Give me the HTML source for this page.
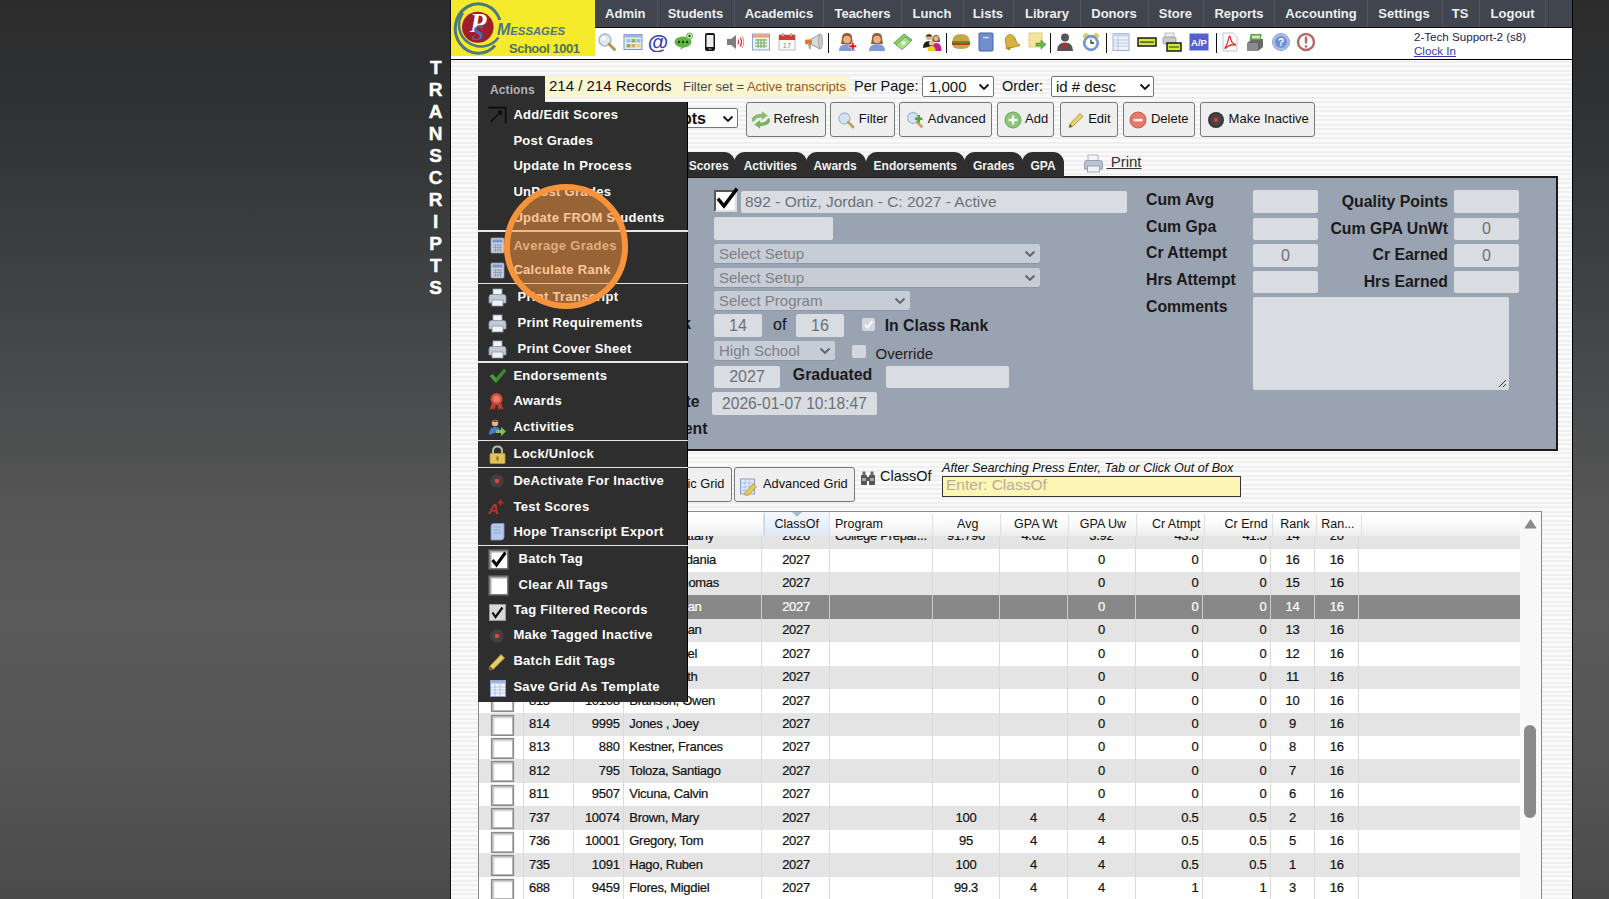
<!DOCTYPE html>
<html><head><meta charset="utf-8">
<style>
*{box-sizing:border-box;margin:0;padding:0}
html,body{width:1609px;height:899px;overflow:hidden}
body{position:relative;font-family:"Liberation Sans",sans-serif;background:linear-gradient(to bottom,#2c2c2d 0px,#303132 100px,#3b3c3e 230px,#4b4c4d 400px,#585858 540px,#5a5a5a 620px,#555 760px,#4b4b4b 899px);}
.a{position:absolute}
.vt{left:425.7px;width:20px;text-align:center;color:#fff;font-weight:bold;font-size:19px;line-height:22px;-webkit-text-stroke:.4px #fff}
#panel{left:450px;top:0;width:1122px;height:899px;background:repeating-linear-gradient(to bottom,#fafafa 0,#fafafa 2.3px,#efefef 2.3px,#efefef 4.5px);border-left:1px solid #111}
#rgut{left:1572px;top:0;width:1px;height:899px;background:#000}
#logo{left:451px;top:0;width:144px;height:58px;background:#f6ea2b}
#nav{left:595px;top:0;width:977px;height:28px;background:#40454f;border-bottom:1px solid #0a0a0a}
.ni{top:0;height:28px;line-height:27px;color:#eef0f0;font-weight:bold;font-size:13px;text-align:center}
.ns{top:0;width:1px;height:27px;background:#535862}
#icons{left:595px;top:28px;width:977px;height:30px;background:#fff}
#hline{left:451px;top:59px;width:1121px;height:1px;background:#000}
#wline{left:451px;top:55.7px;width:144px;height:3.3px;background:#fff}
.sel{background:#fff;border:1px solid #767676;border-radius:2px;overflow:hidden;font-size:15px;color:#111}
.sel span{position:absolute;top:0;line-height:19px;white-space:nowrap}
.chev{position:absolute;top:6px}
.btn{background:#efefef;border:1px solid #787878;border-radius:3px;font-size:13px;color:#111}
.btn span{top:0;line-height:31px;white-space:nowrap}
.tab{top:152px;height:24.5px;background:#2e2e2e;border-radius:11px 11px 0 0}
.tabt{top:153.5px;line-height:25px;font-size:12px;font-weight:bold;color:#f2f2f2;white-space:nowrap}
.inp{background:#d9dce1;border-radius:2px;white-space:nowrap;overflow:hidden}
.lbl{font-weight:bold;color:#1a1a1a;white-space:nowrap}
.mi{font-size:13px;font-weight:bold;letter-spacing:.3px;line-height:19px;white-space:nowrap}
.gt{font-size:13px;letter-spacing:-.3px;line-height:16px;white-space:nowrap;-webkit-text-stroke:.2px currentColor}
.gh{top:516px;font-size:12.5px;line-height:16px;color:#111;white-space:nowrap}
.cb{width:23px;height:21px;background:#fff;border:1px solid #8a8a8a;box-shadow:inset 0 0 0 1px #b5b5b5,inset 2px 2px 2px #c8c8c8,0 0 1px #aaa}
</style></head><body>
<div class="a vt" style="top:57px">T<br>R<br>A<br>N<br>S<br>C<br>R<br>I<br>P<br>T<br>S</div>
<div id="panel" class="a"></div>
<div id="rgut" class="a"></div>
<div id="logo" class="a"></div>
<svg class="a" style="left:451px;top:0" width="144" height="58" viewBox="0 0 144 58">
<rect x="1" y="0" width="142.5" height="55.7" fill="#f6ea2c"/>
<path d="M48.9 20 A23 24.7 0 1 0 44 45.5" fill="none" stroke="#4a7a80" stroke-width="3"/>
<path d="M12 13 A21 20.5 0 1 0 47.5 37.5" fill="none" stroke="#4a7a80" stroke-width="2.5"/>
<ellipse cx="26.8" cy="27.2" rx="15.8" ry="15.5" fill="#9c1f2b"/>
<text x="19" y="32.3" font-family="Liberation Serif" font-style="italic" font-weight="bold" font-size="27" fill="#fff">P</text>
<text x="21" y="40" font-family="Liberation Serif" font-style="italic" font-weight="bold" font-size="22" fill="#4e68b4">S</text>
<text x="46" y="34.8" font-family="Liberation Sans" font-style="italic" font-weight="bold" fill="#4b7881"><tspan font-size="16">M</tspan><tspan font-size="11.3">ESSAGES</tspan></text>
<text x="58" y="52.8" font-family="Liberation Sans" font-weight="bold" font-size="13" fill="#4e725f" textLength="71">School 1001</text>
</svg>

<div id="nav" class="a"></div>
<div class="a ni" style="left:575.3px;width:100px">Admin</div>
<div class="a ni" style="left:645.5px;width:100px">Students</div>
<div class="a ni" style="left:729.0px;width:100px">Academics</div>
<div class="a ni" style="left:812.5px;width:100px">Teachers</div>
<div class="a ni" style="left:882.0px;width:100px">Lunch</div>
<div class="a ni" style="left:937.8px;width:100px">Lists</div>
<div class="a ni" style="left:997.0px;width:100px">Library</div>
<div class="a ni" style="left:1064.0px;width:100px">Donors</div>
<div class="a ni" style="left:1125.4px;width:100px">Store</div>
<div class="a ni" style="left:1189.0px;width:100px">Reports</div>
<div class="a ni" style="left:1271.0px;width:100px">Accounting</div>
<div class="a ni" style="left:1354.0px;width:100px">Settings</div>
<div class="a ni" style="left:1410.0px;width:100px">TS</div>
<div class="a ni" style="left:1462.6px;width:100px">Logout</div>
<div class="a ns" style="left:657px"></div>
<div class="a ns" style="left:734px"></div>
<div class="a ns" style="left:823px"></div>
<div class="a ns" style="left:901px"></div>
<div class="a ns" style="left:963px"></div>
<div class="a ns" style="left:1013px"></div>
<div class="a ns" style="left:1080px"></div>
<div class="a ns" style="left:1148px"></div>
<div class="a ns" style="left:1203px"></div>
<div class="a ns" style="left:1274px"></div>
<div class="a ns" style="left:1367px"></div>
<div class="a ns" style="left:1442px"></div>
<div class="a ns" style="left:1479px"></div>
<div class="a ns" style="left:1545px"></div>
<div id="icons" class="a"></div>
<!--GRID-->
<div class="a btn" style="left:640px;top:467px;width:92px;height:34.5px"><span class="a" style="left:-16.5px;width:100px;text-align:right;line-height:32px;font-size:12.8px">Basic Grid</span></div>
<div class="a btn" style="left:734px;top:467px;width:121px;height:34.5px"><svg class="a" style="left:4px;top:8px" width="20" height="20" viewBox="0 0 20 20"><rect x="1.5" y="3" width="14" height="15" fill="#dfe8f6" stroke="#8aa0cc" stroke-width="1"/><path d="M2 7 H15 M2 11 H15 M2 14.5 H15 M6 3.5 V17.5 M10.5 3.5 V17.5" stroke="#a9bde0" stroke-width=".8"/><path d="M5 18 L14 8 L17.5 11 L8.5 20Z" fill="#e6c85a" stroke="#b09040" stroke-width=".8"/></svg><span class="a" style="left:28px;line-height:32px;font-size:12.8px">Advanced Grid</span></div>
<svg class="a" style="left:860px;top:470px" width="16" height="16" viewBox="0 0 16 16"><rect x="1" y="5" width="6" height="10" rx="1" fill="#555"/><rect x="9" y="5" width="6" height="10" rx="1" fill="#555"/><rect x="2.5" y="1.5" width="3" height="4" fill="#666"/><rect x="10.5" y="1.5" width="3" height="4" fill="#666"/><rect x="6" y="7" width="4" height="4" fill="#555"/><rect x="2" y="8" width="4" height="3" fill="#aaa"/><rect x="10" y="8" width="4" height="3" fill="#aaa"/></svg>
<div class="a" style="left:880px;top:466px;line-height:21px;font-size:14.5px;color:#111">ClassOf</div>
<div class="a" style="left:942px;top:460px;line-height:17px;font-size:12.6px;font-style:italic;color:#111;white-space:nowrap">After Searching Press Enter, Tab or Click Out of Box</div>
<div class="a" style="left:942px;top:475.5px;width:299px;height:21px;background:#fcf5b4;border:1px solid #333;line-height:16.5px;font-size:15.5px;color:#b5b09a;padding-left:3px">Enter: ClassOf</div>
<div class="a" style="left:478px;top:511px;width:1064px;height:400px;background:#fff;border:1px solid #8a8a8a;border-bottom:none"></div>
<div class="a" style="left:1520px;top:512px;width:21px;height:390px;background:#f9f9f9"></div>
<div class="a" style="left:1524.2px;top:725px;width:11.6px;height:93px;border-radius:6px;background:#8a8a8a"></div>
<svg class="a" style="left:1523.5px;top:518.5px" width="13" height="10" viewBox="0 0 13 10"><path d="M6.5 1.2 L11.8 9 H1.2Z" fill="#8a8a8a" stroke="#8a8a8a" stroke-width="1.2" stroke-linejoin="round"/></svg>
<div class="a" style="left:479px;top:525.00px;width:1041px;height:23.50px;background:#e4e4e4"></div>
<div class="a" style="left:522.5px;top:525.00px;width:1px;height:23.50px;background:#dadada"></div>
<div class="a" style="left:572.7px;top:525.00px;width:1px;height:23.50px;background:#dadada"></div>
<div class="a" style="left:622.9px;top:525.00px;width:1px;height:23.50px;background:#dadada"></div>
<div class="a" style="left:761.0px;top:525.00px;width:1px;height:23.50px;background:#dadada"></div>
<div class="a" style="left:828.8px;top:525.00px;width:1px;height:23.50px;background:#dadada"></div>
<div class="a" style="left:932.0px;top:525.00px;width:1px;height:23.50px;background:#dadada"></div>
<div class="a" style="left:999.0px;top:525.00px;width:1px;height:23.50px;background:#dadada"></div>
<div class="a" style="left:1067.0px;top:525.00px;width:1px;height:23.50px;background:#dadada"></div>
<div class="a" style="left:1134.8px;top:525.00px;width:1px;height:23.50px;background:#dadada"></div>
<div class="a" style="left:1202.1px;top:525.00px;width:1px;height:23.50px;background:#dadada"></div>
<div class="a" style="left:1270.0px;top:525.00px;width:1px;height:23.50px;background:#dadada"></div>
<div class="a" style="left:1314.1px;top:525.00px;width:1px;height:23.50px;background:#dadada"></div>
<div class="a" style="left:1358.3px;top:525.00px;width:1px;height:23.50px;background:#dadada"></div>
<div class="a gt" style="left:529.0px;top:528.4px;color:#111">821</div>
<div class="a gt" style="left:519.6px;width:100px;text-align:right;top:528.4px;color:#111">10113</div>
<div class="a gt" style="left:614.0px;width:100px;text-align:right;top:528.4px;color:#111">Adams, Brittany</div>
<div class="a gt" style="left:746.0px;width:100px;text-align:center;top:528.4px;color:#111">2026</div>
<div class="a gt" style="left:916.0px;width:100px;text-align:center;top:528.4px;color:#111">91.796</div>
<div class="a gt" style="left:835.0px;top:528.4px;color:#111">College Prepar...</div>
<div class="a gt" style="left:983.5px;width:100px;text-align:center;top:528.4px;color:#111">4.02</div>
<div class="a gt" style="left:1051.4px;width:100px;text-align:center;top:528.4px;color:#111">3.92</div>
<div class="a gt" style="left:1098.5px;width:100px;text-align:right;top:528.4px;color:#111">43.5</div>
<div class="a gt" style="left:1166.5px;width:100px;text-align:right;top:528.4px;color:#111">41.5</div>
<div class="a gt" style="left:1242.5px;width:100px;text-align:center;top:528.4px;color:#111">14</div>
<div class="a gt" style="left:1286.7px;width:100px;text-align:center;top:528.4px;color:#111">20</div>
<div class="a cb" style="left:490.5px;top:527.00px"></div>
<div class="a" style="left:479px;top:548.50px;width:1041px;height:23.43px;background:#ffffff"></div>
<div class="a" style="left:522.5px;top:548.50px;width:1px;height:23.43px;background:#dadada"></div>
<div class="a" style="left:572.7px;top:548.50px;width:1px;height:23.43px;background:#dadada"></div>
<div class="a" style="left:622.9px;top:548.50px;width:1px;height:23.43px;background:#dadada"></div>
<div class="a" style="left:761.0px;top:548.50px;width:1px;height:23.43px;background:#dadada"></div>
<div class="a" style="left:828.8px;top:548.50px;width:1px;height:23.43px;background:#dadada"></div>
<div class="a" style="left:932.0px;top:548.50px;width:1px;height:23.43px;background:#dadada"></div>
<div class="a" style="left:999.0px;top:548.50px;width:1px;height:23.43px;background:#dadada"></div>
<div class="a" style="left:1067.0px;top:548.50px;width:1px;height:23.43px;background:#dadada"></div>
<div class="a" style="left:1134.8px;top:548.50px;width:1px;height:23.43px;background:#dadada"></div>
<div class="a" style="left:1202.1px;top:548.50px;width:1px;height:23.43px;background:#dadada"></div>
<div class="a" style="left:1270.0px;top:548.50px;width:1px;height:23.43px;background:#dadada"></div>
<div class="a" style="left:1314.1px;top:548.50px;width:1px;height:23.43px;background:#dadada"></div>
<div class="a" style="left:1358.3px;top:548.50px;width:1px;height:23.43px;background:#dadada"></div>
<div class="a gt" style="left:529.0px;top:551.9px;color:#111">820</div>
<div class="a gt" style="left:519.6px;width:100px;text-align:right;top:551.9px;color:#111">10112</div>
<div class="a gt" style="left:616.0px;width:100px;text-align:right;top:551.9px;color:#111">Brown, Jordania</div>
<div class="a gt" style="left:746.0px;width:100px;text-align:center;top:551.9px;color:#111">2027</div>
<div class="a gt" style="left:1051.4px;width:100px;text-align:center;top:551.9px;color:#111">0</div>
<div class="a gt" style="left:1098.5px;width:100px;text-align:right;top:551.9px;color:#111">0</div>
<div class="a gt" style="left:1166.5px;width:100px;text-align:right;top:551.9px;color:#111">0</div>
<div class="a gt" style="left:1242.5px;width:100px;text-align:center;top:551.9px;color:#111">16</div>
<div class="a gt" style="left:1286.7px;width:100px;text-align:center;top:551.9px;color:#111">16</div>
<div class="a cb" style="left:490.5px;top:550.50px"></div>
<div class="a" style="left:479px;top:571.93px;width:1041px;height:23.43px;background:#e4e4e4"></div>
<div class="a" style="left:522.5px;top:571.93px;width:1px;height:23.43px;background:#dadada"></div>
<div class="a" style="left:572.7px;top:571.93px;width:1px;height:23.43px;background:#dadada"></div>
<div class="a" style="left:622.9px;top:571.93px;width:1px;height:23.43px;background:#dadada"></div>
<div class="a" style="left:761.0px;top:571.93px;width:1px;height:23.43px;background:#dadada"></div>
<div class="a" style="left:828.8px;top:571.93px;width:1px;height:23.43px;background:#dadada"></div>
<div class="a" style="left:932.0px;top:571.93px;width:1px;height:23.43px;background:#dadada"></div>
<div class="a" style="left:999.0px;top:571.93px;width:1px;height:23.43px;background:#dadada"></div>
<div class="a" style="left:1067.0px;top:571.93px;width:1px;height:23.43px;background:#dadada"></div>
<div class="a" style="left:1134.8px;top:571.93px;width:1px;height:23.43px;background:#dadada"></div>
<div class="a" style="left:1202.1px;top:571.93px;width:1px;height:23.43px;background:#dadada"></div>
<div class="a" style="left:1270.0px;top:571.93px;width:1px;height:23.43px;background:#dadada"></div>
<div class="a" style="left:1314.1px;top:571.93px;width:1px;height:23.43px;background:#dadada"></div>
<div class="a" style="left:1358.3px;top:571.93px;width:1px;height:23.43px;background:#dadada"></div>
<div class="a gt" style="left:529.0px;top:575.3px;color:#111">819</div>
<div class="a gt" style="left:519.6px;width:100px;text-align:right;top:575.3px;color:#111">10111</div>
<div class="a gt" style="left:619.0px;width:100px;text-align:right;top:575.3px;color:#111">Smith, Thomas</div>
<div class="a gt" style="left:746.0px;width:100px;text-align:center;top:575.3px;color:#111">2027</div>
<div class="a gt" style="left:1051.4px;width:100px;text-align:center;top:575.3px;color:#111">0</div>
<div class="a gt" style="left:1098.5px;width:100px;text-align:right;top:575.3px;color:#111">0</div>
<div class="a gt" style="left:1166.5px;width:100px;text-align:right;top:575.3px;color:#111">0</div>
<div class="a gt" style="left:1242.5px;width:100px;text-align:center;top:575.3px;color:#111">15</div>
<div class="a gt" style="left:1286.7px;width:100px;text-align:center;top:575.3px;color:#111">16</div>
<div class="a cb" style="left:490.5px;top:573.93px"></div>
<div class="a" style="left:479px;top:595.36px;width:1041px;height:23.43px;background:#888888"></div>
<div class="a" style="left:522.5px;top:595.36px;width:1px;height:23.43px;background:#cdcdcd"></div>
<div class="a" style="left:572.7px;top:595.36px;width:1px;height:23.43px;background:#cdcdcd"></div>
<div class="a" style="left:622.9px;top:595.36px;width:1px;height:23.43px;background:#cdcdcd"></div>
<div class="a" style="left:761.0px;top:595.36px;width:1px;height:23.43px;background:#cdcdcd"></div>
<div class="a" style="left:828.8px;top:595.36px;width:1px;height:23.43px;background:#cdcdcd"></div>
<div class="a" style="left:932.0px;top:595.36px;width:1px;height:23.43px;background:#cdcdcd"></div>
<div class="a" style="left:999.0px;top:595.36px;width:1px;height:23.43px;background:#cdcdcd"></div>
<div class="a" style="left:1067.0px;top:595.36px;width:1px;height:23.43px;background:#cdcdcd"></div>
<div class="a" style="left:1134.8px;top:595.36px;width:1px;height:23.43px;background:#cdcdcd"></div>
<div class="a" style="left:1202.1px;top:595.36px;width:1px;height:23.43px;background:#cdcdcd"></div>
<div class="a" style="left:1270.0px;top:595.36px;width:1px;height:23.43px;background:#cdcdcd"></div>
<div class="a" style="left:1314.1px;top:595.36px;width:1px;height:23.43px;background:#cdcdcd"></div>
<div class="a" style="left:1358.3px;top:595.36px;width:1px;height:23.43px;background:#cdcdcd"></div>
<div class="a gt" style="left:529.0px;top:598.8px;color:#fff">818</div>
<div class="a gt" style="left:519.6px;width:100px;text-align:right;top:598.8px;color:#fff">10110</div>
<div class="a gt" style="left:601.5px;width:100px;text-align:right;top:598.8px;color:#fff">Ortiz, Jordan</div>
<div class="a gt" style="left:746.0px;width:100px;text-align:center;top:598.8px;color:#fff">2027</div>
<div class="a gt" style="left:1051.4px;width:100px;text-align:center;top:598.8px;color:#fff">0</div>
<div class="a gt" style="left:1098.5px;width:100px;text-align:right;top:598.8px;color:#fff">0</div>
<div class="a gt" style="left:1166.5px;width:100px;text-align:right;top:598.8px;color:#fff">0</div>
<div class="a gt" style="left:1242.5px;width:100px;text-align:center;top:598.8px;color:#fff">14</div>
<div class="a gt" style="left:1286.7px;width:100px;text-align:center;top:598.8px;color:#fff">16</div>
<div class="a cb" style="left:490.5px;top:597.36px"></div>
<div class="a" style="left:479px;top:618.79px;width:1041px;height:23.43px;background:#e4e4e4"></div>
<div class="a" style="left:522.5px;top:618.79px;width:1px;height:23.43px;background:#dadada"></div>
<div class="a" style="left:572.7px;top:618.79px;width:1px;height:23.43px;background:#dadada"></div>
<div class="a" style="left:622.9px;top:618.79px;width:1px;height:23.43px;background:#dadada"></div>
<div class="a" style="left:761.0px;top:618.79px;width:1px;height:23.43px;background:#dadada"></div>
<div class="a" style="left:828.8px;top:618.79px;width:1px;height:23.43px;background:#dadada"></div>
<div class="a" style="left:932.0px;top:618.79px;width:1px;height:23.43px;background:#dadada"></div>
<div class="a" style="left:999.0px;top:618.79px;width:1px;height:23.43px;background:#dadada"></div>
<div class="a" style="left:1067.0px;top:618.79px;width:1px;height:23.43px;background:#dadada"></div>
<div class="a" style="left:1134.8px;top:618.79px;width:1px;height:23.43px;background:#dadada"></div>
<div class="a" style="left:1202.1px;top:618.79px;width:1px;height:23.43px;background:#dadada"></div>
<div class="a" style="left:1270.0px;top:618.79px;width:1px;height:23.43px;background:#dadada"></div>
<div class="a" style="left:1314.1px;top:618.79px;width:1px;height:23.43px;background:#dadada"></div>
<div class="a" style="left:1358.3px;top:618.79px;width:1px;height:23.43px;background:#dadada"></div>
<div class="a gt" style="left:529.0px;top:622.2px;color:#111">817</div>
<div class="a gt" style="left:519.6px;width:100px;text-align:right;top:622.2px;color:#111">10109</div>
<div class="a gt" style="left:601.5px;width:100px;text-align:right;top:622.2px;color:#111">Ortiz, Juan</div>
<div class="a gt" style="left:746.0px;width:100px;text-align:center;top:622.2px;color:#111">2027</div>
<div class="a gt" style="left:1051.4px;width:100px;text-align:center;top:622.2px;color:#111">0</div>
<div class="a gt" style="left:1098.5px;width:100px;text-align:right;top:622.2px;color:#111">0</div>
<div class="a gt" style="left:1166.5px;width:100px;text-align:right;top:622.2px;color:#111">0</div>
<div class="a gt" style="left:1242.5px;width:100px;text-align:center;top:622.2px;color:#111">13</div>
<div class="a gt" style="left:1286.7px;width:100px;text-align:center;top:622.2px;color:#111">16</div>
<div class="a cb" style="left:490.5px;top:620.79px"></div>
<div class="a" style="left:479px;top:642.22px;width:1041px;height:23.43px;background:#ffffff"></div>
<div class="a" style="left:522.5px;top:642.22px;width:1px;height:23.43px;background:#dadada"></div>
<div class="a" style="left:572.7px;top:642.22px;width:1px;height:23.43px;background:#dadada"></div>
<div class="a" style="left:622.9px;top:642.22px;width:1px;height:23.43px;background:#dadada"></div>
<div class="a" style="left:761.0px;top:642.22px;width:1px;height:23.43px;background:#dadada"></div>
<div class="a" style="left:828.8px;top:642.22px;width:1px;height:23.43px;background:#dadada"></div>
<div class="a" style="left:932.0px;top:642.22px;width:1px;height:23.43px;background:#dadada"></div>
<div class="a" style="left:999.0px;top:642.22px;width:1px;height:23.43px;background:#dadada"></div>
<div class="a" style="left:1067.0px;top:642.22px;width:1px;height:23.43px;background:#dadada"></div>
<div class="a" style="left:1134.8px;top:642.22px;width:1px;height:23.43px;background:#dadada"></div>
<div class="a" style="left:1202.1px;top:642.22px;width:1px;height:23.43px;background:#dadada"></div>
<div class="a" style="left:1270.0px;top:642.22px;width:1px;height:23.43px;background:#dadada"></div>
<div class="a" style="left:1314.1px;top:642.22px;width:1px;height:23.43px;background:#dadada"></div>
<div class="a" style="left:1358.3px;top:642.22px;width:1px;height:23.43px;background:#dadada"></div>
<div class="a gt" style="left:529.0px;top:645.6px;color:#111">816</div>
<div class="a gt" style="left:519.6px;width:100px;text-align:right;top:645.6px;color:#111">10107</div>
<div class="a gt" style="left:597.0px;width:100px;text-align:right;top:645.6px;color:#111">Lopez, Daniel</div>
<div class="a gt" style="left:746.0px;width:100px;text-align:center;top:645.6px;color:#111">2027</div>
<div class="a gt" style="left:1051.4px;width:100px;text-align:center;top:645.6px;color:#111">0</div>
<div class="a gt" style="left:1098.5px;width:100px;text-align:right;top:645.6px;color:#111">0</div>
<div class="a gt" style="left:1166.5px;width:100px;text-align:right;top:645.6px;color:#111">0</div>
<div class="a gt" style="left:1242.5px;width:100px;text-align:center;top:645.6px;color:#111">12</div>
<div class="a gt" style="left:1286.7px;width:100px;text-align:center;top:645.6px;color:#111">16</div>
<div class="a cb" style="left:490.5px;top:644.22px"></div>
<div class="a" style="left:479px;top:665.65px;width:1041px;height:23.43px;background:#e4e4e4"></div>
<div class="a" style="left:522.5px;top:665.65px;width:1px;height:23.43px;background:#dadada"></div>
<div class="a" style="left:572.7px;top:665.65px;width:1px;height:23.43px;background:#dadada"></div>
<div class="a" style="left:622.9px;top:665.65px;width:1px;height:23.43px;background:#dadada"></div>
<div class="a" style="left:761.0px;top:665.65px;width:1px;height:23.43px;background:#dadada"></div>
<div class="a" style="left:828.8px;top:665.65px;width:1px;height:23.43px;background:#dadada"></div>
<div class="a" style="left:932.0px;top:665.65px;width:1px;height:23.43px;background:#dadada"></div>
<div class="a" style="left:999.0px;top:665.65px;width:1px;height:23.43px;background:#dadada"></div>
<div class="a" style="left:1067.0px;top:665.65px;width:1px;height:23.43px;background:#dadada"></div>
<div class="a" style="left:1134.8px;top:665.65px;width:1px;height:23.43px;background:#dadada"></div>
<div class="a" style="left:1202.1px;top:665.65px;width:1px;height:23.43px;background:#dadada"></div>
<div class="a" style="left:1270.0px;top:665.65px;width:1px;height:23.43px;background:#dadada"></div>
<div class="a" style="left:1314.1px;top:665.65px;width:1px;height:23.43px;background:#dadada"></div>
<div class="a" style="left:1358.3px;top:665.65px;width:1px;height:23.43px;background:#dadada"></div>
<div class="a gt" style="left:529.0px;top:669.0px;color:#111">815</div>
<div class="a gt" style="left:519.6px;width:100px;text-align:right;top:669.0px;color:#111">10106</div>
<div class="a gt" style="left:597.5px;width:100px;text-align:right;top:669.0px;color:#111">Young, Elizabeth</div>
<div class="a gt" style="left:746.0px;width:100px;text-align:center;top:669.0px;color:#111">2027</div>
<div class="a gt" style="left:1051.4px;width:100px;text-align:center;top:669.0px;color:#111">0</div>
<div class="a gt" style="left:1098.5px;width:100px;text-align:right;top:669.0px;color:#111">0</div>
<div class="a gt" style="left:1166.5px;width:100px;text-align:right;top:669.0px;color:#111">0</div>
<div class="a gt" style="left:1242.5px;width:100px;text-align:center;top:669.0px;color:#111">11</div>
<div class="a gt" style="left:1286.7px;width:100px;text-align:center;top:669.0px;color:#111">16</div>
<div class="a cb" style="left:490.5px;top:667.65px"></div>
<div class="a" style="left:479px;top:689.08px;width:1041px;height:23.43px;background:#ffffff"></div>
<div class="a" style="left:522.5px;top:689.08px;width:1px;height:23.43px;background:#dadada"></div>
<div class="a" style="left:572.7px;top:689.08px;width:1px;height:23.43px;background:#dadada"></div>
<div class="a" style="left:622.9px;top:689.08px;width:1px;height:23.43px;background:#dadada"></div>
<div class="a" style="left:761.0px;top:689.08px;width:1px;height:23.43px;background:#dadada"></div>
<div class="a" style="left:828.8px;top:689.08px;width:1px;height:23.43px;background:#dadada"></div>
<div class="a" style="left:932.0px;top:689.08px;width:1px;height:23.43px;background:#dadada"></div>
<div class="a" style="left:999.0px;top:689.08px;width:1px;height:23.43px;background:#dadada"></div>
<div class="a" style="left:1067.0px;top:689.08px;width:1px;height:23.43px;background:#dadada"></div>
<div class="a" style="left:1134.8px;top:689.08px;width:1px;height:23.43px;background:#dadada"></div>
<div class="a" style="left:1202.1px;top:689.08px;width:1px;height:23.43px;background:#dadada"></div>
<div class="a" style="left:1270.0px;top:689.08px;width:1px;height:23.43px;background:#dadada"></div>
<div class="a" style="left:1314.1px;top:689.08px;width:1px;height:23.43px;background:#dadada"></div>
<div class="a" style="left:1358.3px;top:689.08px;width:1px;height:23.43px;background:#dadada"></div>
<div class="a gt" style="left:529.0px;top:692.5px;color:#111">815</div>
<div class="a gt" style="left:519.6px;width:100px;text-align:right;top:692.5px;color:#111">10108</div>
<div class="a gt" style="left:629.3px;top:692.5px;color:#111">Branson, Owen</div>
<div class="a gt" style="left:746.0px;width:100px;text-align:center;top:692.5px;color:#111">2027</div>
<div class="a gt" style="left:1051.4px;width:100px;text-align:center;top:692.5px;color:#111">0</div>
<div class="a gt" style="left:1098.5px;width:100px;text-align:right;top:692.5px;color:#111">0</div>
<div class="a gt" style="left:1166.5px;width:100px;text-align:right;top:692.5px;color:#111">0</div>
<div class="a gt" style="left:1242.5px;width:100px;text-align:center;top:692.5px;color:#111">10</div>
<div class="a gt" style="left:1286.7px;width:100px;text-align:center;top:692.5px;color:#111">16</div>
<div class="a cb" style="left:490.5px;top:691.08px"></div>
<div class="a" style="left:479px;top:712.51px;width:1041px;height:23.43px;background:#e4e4e4"></div>
<div class="a" style="left:522.5px;top:712.51px;width:1px;height:23.43px;background:#dadada"></div>
<div class="a" style="left:572.7px;top:712.51px;width:1px;height:23.43px;background:#dadada"></div>
<div class="a" style="left:622.9px;top:712.51px;width:1px;height:23.43px;background:#dadada"></div>
<div class="a" style="left:761.0px;top:712.51px;width:1px;height:23.43px;background:#dadada"></div>
<div class="a" style="left:828.8px;top:712.51px;width:1px;height:23.43px;background:#dadada"></div>
<div class="a" style="left:932.0px;top:712.51px;width:1px;height:23.43px;background:#dadada"></div>
<div class="a" style="left:999.0px;top:712.51px;width:1px;height:23.43px;background:#dadada"></div>
<div class="a" style="left:1067.0px;top:712.51px;width:1px;height:23.43px;background:#dadada"></div>
<div class="a" style="left:1134.8px;top:712.51px;width:1px;height:23.43px;background:#dadada"></div>
<div class="a" style="left:1202.1px;top:712.51px;width:1px;height:23.43px;background:#dadada"></div>
<div class="a" style="left:1270.0px;top:712.51px;width:1px;height:23.43px;background:#dadada"></div>
<div class="a" style="left:1314.1px;top:712.51px;width:1px;height:23.43px;background:#dadada"></div>
<div class="a" style="left:1358.3px;top:712.51px;width:1px;height:23.43px;background:#dadada"></div>
<div class="a gt" style="left:529.0px;top:715.9px;color:#111">814</div>
<div class="a gt" style="left:519.6px;width:100px;text-align:right;top:715.9px;color:#111">9995</div>
<div class="a gt" style="left:629.3px;top:715.9px;color:#111">Jones , Joey</div>
<div class="a gt" style="left:746.0px;width:100px;text-align:center;top:715.9px;color:#111">2027</div>
<div class="a gt" style="left:1051.4px;width:100px;text-align:center;top:715.9px;color:#111">0</div>
<div class="a gt" style="left:1098.5px;width:100px;text-align:right;top:715.9px;color:#111">0</div>
<div class="a gt" style="left:1166.5px;width:100px;text-align:right;top:715.9px;color:#111">0</div>
<div class="a gt" style="left:1242.5px;width:100px;text-align:center;top:715.9px;color:#111">9</div>
<div class="a gt" style="left:1286.7px;width:100px;text-align:center;top:715.9px;color:#111">16</div>
<div class="a cb" style="left:490.5px;top:714.51px"></div>
<div class="a" style="left:479px;top:735.94px;width:1041px;height:23.43px;background:#ffffff"></div>
<div class="a" style="left:522.5px;top:735.94px;width:1px;height:23.43px;background:#dadada"></div>
<div class="a" style="left:572.7px;top:735.94px;width:1px;height:23.43px;background:#dadada"></div>
<div class="a" style="left:622.9px;top:735.94px;width:1px;height:23.43px;background:#dadada"></div>
<div class="a" style="left:761.0px;top:735.94px;width:1px;height:23.43px;background:#dadada"></div>
<div class="a" style="left:828.8px;top:735.94px;width:1px;height:23.43px;background:#dadada"></div>
<div class="a" style="left:932.0px;top:735.94px;width:1px;height:23.43px;background:#dadada"></div>
<div class="a" style="left:999.0px;top:735.94px;width:1px;height:23.43px;background:#dadada"></div>
<div class="a" style="left:1067.0px;top:735.94px;width:1px;height:23.43px;background:#dadada"></div>
<div class="a" style="left:1134.8px;top:735.94px;width:1px;height:23.43px;background:#dadada"></div>
<div class="a" style="left:1202.1px;top:735.94px;width:1px;height:23.43px;background:#dadada"></div>
<div class="a" style="left:1270.0px;top:735.94px;width:1px;height:23.43px;background:#dadada"></div>
<div class="a" style="left:1314.1px;top:735.94px;width:1px;height:23.43px;background:#dadada"></div>
<div class="a" style="left:1358.3px;top:735.94px;width:1px;height:23.43px;background:#dadada"></div>
<div class="a gt" style="left:529.0px;top:739.3px;color:#111">813</div>
<div class="a gt" style="left:519.6px;width:100px;text-align:right;top:739.3px;color:#111">880</div>
<div class="a gt" style="left:629.3px;top:739.3px;color:#111">Kestner, Frances</div>
<div class="a gt" style="left:746.0px;width:100px;text-align:center;top:739.3px;color:#111">2027</div>
<div class="a gt" style="left:1051.4px;width:100px;text-align:center;top:739.3px;color:#111">0</div>
<div class="a gt" style="left:1098.5px;width:100px;text-align:right;top:739.3px;color:#111">0</div>
<div class="a gt" style="left:1166.5px;width:100px;text-align:right;top:739.3px;color:#111">0</div>
<div class="a gt" style="left:1242.5px;width:100px;text-align:center;top:739.3px;color:#111">8</div>
<div class="a gt" style="left:1286.7px;width:100px;text-align:center;top:739.3px;color:#111">16</div>
<div class="a cb" style="left:490.5px;top:737.94px"></div>
<div class="a" style="left:479px;top:759.37px;width:1041px;height:23.43px;background:#e4e4e4"></div>
<div class="a" style="left:522.5px;top:759.37px;width:1px;height:23.43px;background:#dadada"></div>
<div class="a" style="left:572.7px;top:759.37px;width:1px;height:23.43px;background:#dadada"></div>
<div class="a" style="left:622.9px;top:759.37px;width:1px;height:23.43px;background:#dadada"></div>
<div class="a" style="left:761.0px;top:759.37px;width:1px;height:23.43px;background:#dadada"></div>
<div class="a" style="left:828.8px;top:759.37px;width:1px;height:23.43px;background:#dadada"></div>
<div class="a" style="left:932.0px;top:759.37px;width:1px;height:23.43px;background:#dadada"></div>
<div class="a" style="left:999.0px;top:759.37px;width:1px;height:23.43px;background:#dadada"></div>
<div class="a" style="left:1067.0px;top:759.37px;width:1px;height:23.43px;background:#dadada"></div>
<div class="a" style="left:1134.8px;top:759.37px;width:1px;height:23.43px;background:#dadada"></div>
<div class="a" style="left:1202.1px;top:759.37px;width:1px;height:23.43px;background:#dadada"></div>
<div class="a" style="left:1270.0px;top:759.37px;width:1px;height:23.43px;background:#dadada"></div>
<div class="a" style="left:1314.1px;top:759.37px;width:1px;height:23.43px;background:#dadada"></div>
<div class="a" style="left:1358.3px;top:759.37px;width:1px;height:23.43px;background:#dadada"></div>
<div class="a gt" style="left:529.0px;top:762.8px;color:#111">812</div>
<div class="a gt" style="left:519.6px;width:100px;text-align:right;top:762.8px;color:#111">795</div>
<div class="a gt" style="left:629.3px;top:762.8px;color:#111">Toloza, Santiago</div>
<div class="a gt" style="left:746.0px;width:100px;text-align:center;top:762.8px;color:#111">2027</div>
<div class="a gt" style="left:1051.4px;width:100px;text-align:center;top:762.8px;color:#111">0</div>
<div class="a gt" style="left:1098.5px;width:100px;text-align:right;top:762.8px;color:#111">0</div>
<div class="a gt" style="left:1166.5px;width:100px;text-align:right;top:762.8px;color:#111">0</div>
<div class="a gt" style="left:1242.5px;width:100px;text-align:center;top:762.8px;color:#111">7</div>
<div class="a gt" style="left:1286.7px;width:100px;text-align:center;top:762.8px;color:#111">16</div>
<div class="a cb" style="left:490.5px;top:761.37px"></div>
<div class="a" style="left:479px;top:782.80px;width:1041px;height:23.43px;background:#ffffff"></div>
<div class="a" style="left:522.5px;top:782.80px;width:1px;height:23.43px;background:#dadada"></div>
<div class="a" style="left:572.7px;top:782.80px;width:1px;height:23.43px;background:#dadada"></div>
<div class="a" style="left:622.9px;top:782.80px;width:1px;height:23.43px;background:#dadada"></div>
<div class="a" style="left:761.0px;top:782.80px;width:1px;height:23.43px;background:#dadada"></div>
<div class="a" style="left:828.8px;top:782.80px;width:1px;height:23.43px;background:#dadada"></div>
<div class="a" style="left:932.0px;top:782.80px;width:1px;height:23.43px;background:#dadada"></div>
<div class="a" style="left:999.0px;top:782.80px;width:1px;height:23.43px;background:#dadada"></div>
<div class="a" style="left:1067.0px;top:782.80px;width:1px;height:23.43px;background:#dadada"></div>
<div class="a" style="left:1134.8px;top:782.80px;width:1px;height:23.43px;background:#dadada"></div>
<div class="a" style="left:1202.1px;top:782.80px;width:1px;height:23.43px;background:#dadada"></div>
<div class="a" style="left:1270.0px;top:782.80px;width:1px;height:23.43px;background:#dadada"></div>
<div class="a" style="left:1314.1px;top:782.80px;width:1px;height:23.43px;background:#dadada"></div>
<div class="a" style="left:1358.3px;top:782.80px;width:1px;height:23.43px;background:#dadada"></div>
<div class="a gt" style="left:529.0px;top:786.2px;color:#111">811</div>
<div class="a gt" style="left:519.6px;width:100px;text-align:right;top:786.2px;color:#111">9507</div>
<div class="a gt" style="left:629.3px;top:786.2px;color:#111">Vicuna, Calvin</div>
<div class="a gt" style="left:746.0px;width:100px;text-align:center;top:786.2px;color:#111">2027</div>
<div class="a gt" style="left:1051.4px;width:100px;text-align:center;top:786.2px;color:#111">0</div>
<div class="a gt" style="left:1098.5px;width:100px;text-align:right;top:786.2px;color:#111">0</div>
<div class="a gt" style="left:1166.5px;width:100px;text-align:right;top:786.2px;color:#111">0</div>
<div class="a gt" style="left:1242.5px;width:100px;text-align:center;top:786.2px;color:#111">6</div>
<div class="a gt" style="left:1286.7px;width:100px;text-align:center;top:786.2px;color:#111">16</div>
<div class="a cb" style="left:490.5px;top:784.80px"></div>
<div class="a" style="left:479px;top:806.23px;width:1041px;height:23.43px;background:#e4e4e4"></div>
<div class="a" style="left:522.5px;top:806.23px;width:1px;height:23.43px;background:#dadada"></div>
<div class="a" style="left:572.7px;top:806.23px;width:1px;height:23.43px;background:#dadada"></div>
<div class="a" style="left:622.9px;top:806.23px;width:1px;height:23.43px;background:#dadada"></div>
<div class="a" style="left:761.0px;top:806.23px;width:1px;height:23.43px;background:#dadada"></div>
<div class="a" style="left:828.8px;top:806.23px;width:1px;height:23.43px;background:#dadada"></div>
<div class="a" style="left:932.0px;top:806.23px;width:1px;height:23.43px;background:#dadada"></div>
<div class="a" style="left:999.0px;top:806.23px;width:1px;height:23.43px;background:#dadada"></div>
<div class="a" style="left:1067.0px;top:806.23px;width:1px;height:23.43px;background:#dadada"></div>
<div class="a" style="left:1134.8px;top:806.23px;width:1px;height:23.43px;background:#dadada"></div>
<div class="a" style="left:1202.1px;top:806.23px;width:1px;height:23.43px;background:#dadada"></div>
<div class="a" style="left:1270.0px;top:806.23px;width:1px;height:23.43px;background:#dadada"></div>
<div class="a" style="left:1314.1px;top:806.23px;width:1px;height:23.43px;background:#dadada"></div>
<div class="a" style="left:1358.3px;top:806.23px;width:1px;height:23.43px;background:#dadada"></div>
<div class="a gt" style="left:529.0px;top:809.6px;color:#111">737</div>
<div class="a gt" style="left:519.6px;width:100px;text-align:right;top:809.6px;color:#111">10074</div>
<div class="a gt" style="left:629.3px;top:809.6px;color:#111">Brown, Mary</div>
<div class="a gt" style="left:746.0px;width:100px;text-align:center;top:809.6px;color:#111">2027</div>
<div class="a gt" style="left:916.0px;width:100px;text-align:center;top:809.6px;color:#111">100</div>
<div class="a gt" style="left:983.5px;width:100px;text-align:center;top:809.6px;color:#111">4</div>
<div class="a gt" style="left:1051.4px;width:100px;text-align:center;top:809.6px;color:#111">4</div>
<div class="a gt" style="left:1098.5px;width:100px;text-align:right;top:809.6px;color:#111">0.5</div>
<div class="a gt" style="left:1166.5px;width:100px;text-align:right;top:809.6px;color:#111">0.5</div>
<div class="a gt" style="left:1242.5px;width:100px;text-align:center;top:809.6px;color:#111">2</div>
<div class="a gt" style="left:1286.7px;width:100px;text-align:center;top:809.6px;color:#111">16</div>
<div class="a cb" style="left:490.5px;top:808.23px"></div>
<div class="a" style="left:479px;top:829.66px;width:1041px;height:23.43px;background:#ffffff"></div>
<div class="a" style="left:522.5px;top:829.66px;width:1px;height:23.43px;background:#dadada"></div>
<div class="a" style="left:572.7px;top:829.66px;width:1px;height:23.43px;background:#dadada"></div>
<div class="a" style="left:622.9px;top:829.66px;width:1px;height:23.43px;background:#dadada"></div>
<div class="a" style="left:761.0px;top:829.66px;width:1px;height:23.43px;background:#dadada"></div>
<div class="a" style="left:828.8px;top:829.66px;width:1px;height:23.43px;background:#dadada"></div>
<div class="a" style="left:932.0px;top:829.66px;width:1px;height:23.43px;background:#dadada"></div>
<div class="a" style="left:999.0px;top:829.66px;width:1px;height:23.43px;background:#dadada"></div>
<div class="a" style="left:1067.0px;top:829.66px;width:1px;height:23.43px;background:#dadada"></div>
<div class="a" style="left:1134.8px;top:829.66px;width:1px;height:23.43px;background:#dadada"></div>
<div class="a" style="left:1202.1px;top:829.66px;width:1px;height:23.43px;background:#dadada"></div>
<div class="a" style="left:1270.0px;top:829.66px;width:1px;height:23.43px;background:#dadada"></div>
<div class="a" style="left:1314.1px;top:829.66px;width:1px;height:23.43px;background:#dadada"></div>
<div class="a" style="left:1358.3px;top:829.66px;width:1px;height:23.43px;background:#dadada"></div>
<div class="a gt" style="left:529.0px;top:833.1px;color:#111">736</div>
<div class="a gt" style="left:519.6px;width:100px;text-align:right;top:833.1px;color:#111">10001</div>
<div class="a gt" style="left:629.3px;top:833.1px;color:#111">Gregory, Tom</div>
<div class="a gt" style="left:746.0px;width:100px;text-align:center;top:833.1px;color:#111">2027</div>
<div class="a gt" style="left:916.0px;width:100px;text-align:center;top:833.1px;color:#111">95</div>
<div class="a gt" style="left:983.5px;width:100px;text-align:center;top:833.1px;color:#111">4</div>
<div class="a gt" style="left:1051.4px;width:100px;text-align:center;top:833.1px;color:#111">4</div>
<div class="a gt" style="left:1098.5px;width:100px;text-align:right;top:833.1px;color:#111">0.5</div>
<div class="a gt" style="left:1166.5px;width:100px;text-align:right;top:833.1px;color:#111">0.5</div>
<div class="a gt" style="left:1242.5px;width:100px;text-align:center;top:833.1px;color:#111">5</div>
<div class="a gt" style="left:1286.7px;width:100px;text-align:center;top:833.1px;color:#111">16</div>
<div class="a cb" style="left:490.5px;top:831.66px"></div>
<div class="a" style="left:479px;top:853.09px;width:1041px;height:23.43px;background:#e4e4e4"></div>
<div class="a" style="left:522.5px;top:853.09px;width:1px;height:23.43px;background:#dadada"></div>
<div class="a" style="left:572.7px;top:853.09px;width:1px;height:23.43px;background:#dadada"></div>
<div class="a" style="left:622.9px;top:853.09px;width:1px;height:23.43px;background:#dadada"></div>
<div class="a" style="left:761.0px;top:853.09px;width:1px;height:23.43px;background:#dadada"></div>
<div class="a" style="left:828.8px;top:853.09px;width:1px;height:23.43px;background:#dadada"></div>
<div class="a" style="left:932.0px;top:853.09px;width:1px;height:23.43px;background:#dadada"></div>
<div class="a" style="left:999.0px;top:853.09px;width:1px;height:23.43px;background:#dadada"></div>
<div class="a" style="left:1067.0px;top:853.09px;width:1px;height:23.43px;background:#dadada"></div>
<div class="a" style="left:1134.8px;top:853.09px;width:1px;height:23.43px;background:#dadada"></div>
<div class="a" style="left:1202.1px;top:853.09px;width:1px;height:23.43px;background:#dadada"></div>
<div class="a" style="left:1270.0px;top:853.09px;width:1px;height:23.43px;background:#dadada"></div>
<div class="a" style="left:1314.1px;top:853.09px;width:1px;height:23.43px;background:#dadada"></div>
<div class="a" style="left:1358.3px;top:853.09px;width:1px;height:23.43px;background:#dadada"></div>
<div class="a gt" style="left:529.0px;top:856.5px;color:#111">735</div>
<div class="a gt" style="left:519.6px;width:100px;text-align:right;top:856.5px;color:#111">1091</div>
<div class="a gt" style="left:629.3px;top:856.5px;color:#111">Hago, Ruben</div>
<div class="a gt" style="left:746.0px;width:100px;text-align:center;top:856.5px;color:#111">2027</div>
<div class="a gt" style="left:916.0px;width:100px;text-align:center;top:856.5px;color:#111">100</div>
<div class="a gt" style="left:983.5px;width:100px;text-align:center;top:856.5px;color:#111">4</div>
<div class="a gt" style="left:1051.4px;width:100px;text-align:center;top:856.5px;color:#111">4</div>
<div class="a gt" style="left:1098.5px;width:100px;text-align:right;top:856.5px;color:#111">0.5</div>
<div class="a gt" style="left:1166.5px;width:100px;text-align:right;top:856.5px;color:#111">0.5</div>
<div class="a gt" style="left:1242.5px;width:100px;text-align:center;top:856.5px;color:#111">1</div>
<div class="a gt" style="left:1286.7px;width:100px;text-align:center;top:856.5px;color:#111">16</div>
<div class="a cb" style="left:490.5px;top:855.09px"></div>
<div class="a" style="left:479px;top:876.52px;width:1041px;height:23.43px;background:#ffffff"></div>
<div class="a" style="left:522.5px;top:876.52px;width:1px;height:23.43px;background:#dadada"></div>
<div class="a" style="left:572.7px;top:876.52px;width:1px;height:23.43px;background:#dadada"></div>
<div class="a" style="left:622.9px;top:876.52px;width:1px;height:23.43px;background:#dadada"></div>
<div class="a" style="left:761.0px;top:876.52px;width:1px;height:23.43px;background:#dadada"></div>
<div class="a" style="left:828.8px;top:876.52px;width:1px;height:23.43px;background:#dadada"></div>
<div class="a" style="left:932.0px;top:876.52px;width:1px;height:23.43px;background:#dadada"></div>
<div class="a" style="left:999.0px;top:876.52px;width:1px;height:23.43px;background:#dadada"></div>
<div class="a" style="left:1067.0px;top:876.52px;width:1px;height:23.43px;background:#dadada"></div>
<div class="a" style="left:1134.8px;top:876.52px;width:1px;height:23.43px;background:#dadada"></div>
<div class="a" style="left:1202.1px;top:876.52px;width:1px;height:23.43px;background:#dadada"></div>
<div class="a" style="left:1270.0px;top:876.52px;width:1px;height:23.43px;background:#dadada"></div>
<div class="a" style="left:1314.1px;top:876.52px;width:1px;height:23.43px;background:#dadada"></div>
<div class="a" style="left:1358.3px;top:876.52px;width:1px;height:23.43px;background:#dadada"></div>
<div class="a gt" style="left:529.0px;top:879.9px;color:#111">688</div>
<div class="a gt" style="left:519.6px;width:100px;text-align:right;top:879.9px;color:#111">9459</div>
<div class="a gt" style="left:629.3px;top:879.9px;color:#111">Flores, Migdiel</div>
<div class="a gt" style="left:746.0px;width:100px;text-align:center;top:879.9px;color:#111">2027</div>
<div class="a gt" style="left:916.0px;width:100px;text-align:center;top:879.9px;color:#111">99.3</div>
<div class="a gt" style="left:983.5px;width:100px;text-align:center;top:879.9px;color:#111">4</div>
<div class="a gt" style="left:1051.4px;width:100px;text-align:center;top:879.9px;color:#111">4</div>
<div class="a gt" style="left:1098.5px;width:100px;text-align:right;top:879.9px;color:#111">1</div>
<div class="a gt" style="left:1166.5px;width:100px;text-align:right;top:879.9px;color:#111">1</div>
<div class="a gt" style="left:1242.5px;width:100px;text-align:center;top:879.9px;color:#111">3</div>
<div class="a gt" style="left:1286.7px;width:100px;text-align:center;top:879.9px;color:#111">16</div>
<div class="a cb" style="left:490.5px;top:878.52px"></div>
<div class="a" style="left:479px;top:512px;width:1041px;height:24px;background:linear-gradient(#fff,#fdfdfd 40%,#ececec)"></div>
<div class="a" style="left:763.5px;top:512px;width:66px;height:24px;background:linear-gradient(#f4f8fd,#dde9f6);border-left:1px solid #c9d7e6;border-right:1px solid #c9d7e6"></div>
<svg class="a" style="left:792px;top:512px" width="10" height="6" viewBox="0 0 10 6"><path d="M0 0 H10 L5 5Z" fill="#a8bcd2"/></svg>
<div class="a" style="left:522.5px;top:514px;width:1px;height:22px;background:#dfdfdf"></div>
<div class="a" style="left:572.7px;top:514px;width:1px;height:22px;background:#dfdfdf"></div>
<div class="a" style="left:622.9px;top:514px;width:1px;height:22px;background:#dfdfdf"></div>
<div class="a" style="left:763.0px;top:514px;width:1px;height:22px;background:#dfdfdf"></div>
<div class="a" style="left:829.1px;top:514px;width:1px;height:22px;background:#dfdfdf"></div>
<div class="a" style="left:931.8px;top:514px;width:1px;height:22px;background:#dfdfdf"></div>
<div class="a" style="left:999.5px;top:514px;width:1px;height:22px;background:#dfdfdf"></div>
<div class="a" style="left:1067.7px;top:514px;width:1px;height:22px;background:#dfdfdf"></div>
<div class="a" style="left:1135.9px;top:514px;width:1px;height:22px;background:#dfdfdf"></div>
<div class="a" style="left:1204.0px;top:514px;width:1px;height:22px;background:#dfdfdf"></div>
<div class="a" style="left:1271.5px;top:514px;width:1px;height:22px;background:#dfdfdf"></div>
<div class="a" style="left:1316.0px;top:514px;width:1px;height:22px;background:#dfdfdf"></div>
<div class="a" style="left:1360.5px;top:514px;width:1px;height:22px;background:#dfdfdf"></div>
<div class="a gh" style="left:529.0px">ID</div>
<div class="a gh" style="left:519.0px;width:100px;text-align:right">Stu #</div>
<div class="a gh" style="left:629.0px">Name</div>
<div class="a gh" style="left:746.8px;width:100px;text-align:center">ClassOf</div>
<div class="a gh" style="left:835.0px">Program</div>
<div class="a gh" style="left:917.7px;width:100px;text-align:center">Avg</div>
<div class="a gh" style="left:985.8px;width:100px;text-align:center">GPA Wt</div>
<div class="a gh" style="left:1053.0px;width:100px;text-align:center">GPA Uw</div>
<div class="a gh" style="left:1100.5px;width:100px;text-align:right">Cr Atmpt</div>
<div class="a gh" style="left:1167.6px;width:100px;text-align:right">Cr Ernd</div>
<div class="a gh" style="left:1244.9px;width:100px;text-align:center">Rank</div>
<div class="a gh" style="left:1287.9px;width:100px;text-align:center">Ran...</div>
<!--/GRID-->
<!--PANEL-->
<div class="a" style="left:478px;top:176px;width:1080px;height:275px;background:#9aa3b2;border:2px solid #1c1c1c;border-left:none"></div>
<div class="a" style="left:714px;top:190px;width:23px;height:22px;background:#fff;border:2px solid #555;border-right-color:#ddd;border-bottom-color:#ddd"></div>
<svg class="a" style="left:714px;top:186px" width="26" height="26" viewBox="0 0 26 26"><path d="M5 14 L10 20 L22 4" stroke="#000" stroke-width="3.5" fill="none" stroke-linecap="square"/></svg>
<div class="a inp" style="left:741px;top:191px;width:386px;height:22px;line-height:22px;font-size:15.5px;color:#6b7079;text-align:left;padding:0 4px">892 - Ortiz, Jordan - C: 2027 - Active</div>
<div class="a inp" style="left:714px;top:217px;width:119px;height:23px;line-height:23px;font-size:16px;color:#6b7079;text-align:left;padding:0 4px"></div>
<div class="a inp" style="left:714px;top:244px;width:326px;height:19px;line-height:19px;font-size:15px;color:#7b8089;padding:0 5px;background:#c7cdd6;box-shadow:0 1px 0 #8e96a4">Select Setup<svg class="a" style="right:4.5px;top:5.5px" width="12" height="8" viewBox="0 0 12 8"><path d="M1.5 1.5 L6 6 L10.5 1.5" stroke="#5f646c" stroke-width="1.9" fill="none"/></svg></div>
<div class="a inp" style="left:714px;top:268px;width:326px;height:19px;line-height:19px;font-size:15px;color:#7b8089;padding:0 5px;background:#c7cdd6;box-shadow:0 1px 0 #8e96a4">Select Setup<svg class="a" style="right:4.5px;top:5.5px" width="12" height="8" viewBox="0 0 12 8"><path d="M1.5 1.5 L6 6 L10.5 1.5" stroke="#5f646c" stroke-width="1.9" fill="none"/></svg></div>
<div class="a inp" style="left:714px;top:291px;width:196px;height:19px;line-height:19px;font-size:15px;color:#7b8089;padding:0 5px;background:#c7cdd6;box-shadow:0 1px 0 #8e96a4">Select Program<svg class="a" style="right:4.5px;top:5.5px" width="12" height="8" viewBox="0 0 12 8"><path d="M1.5 1.5 L6 6 L10.5 1.5" stroke="#5f646c" stroke-width="1.9" fill="none"/></svg></div>
<div class="a inp" style="left:714px;top:314px;width:48px;height:23px;line-height:23px;font-size:16px;color:#6b7079;text-align:center;padding:0 4px">14</div>
<div class="a lbl" style="left:773px;top:314px;line-height:22px;font-size:16px;font-weight:normal;color:#111">of</div>
<div class="a inp" style="left:796px;top:314px;width:48px;height:23px;line-height:23px;font-size:16px;color:#6b7079;text-align:center;padding:0 4px">16</div>
<div class="a" style="left:862px;top:318px;width:13px;height:13px;background:#d3d7dd;border-radius:2px"></div>
<svg class="a" style="left:862px;top:318px" width="13" height="13" viewBox="0 0 13 13"><path d="M3 6.5 L5.5 9.5 L10.5 3" stroke="#fff" stroke-width="1.8" fill="none"/></svg>
<div class="a lbl" style="left:884.7px;top:315px;line-height:22px;font-size:15.8px">In Class Rank</div>
<div class="a inp" style="left:714px;top:341px;width:121px;height:19px;line-height:19px;font-size:15px;color:#7b8089;padding:0 5px;background:#c7cdd6;box-shadow:0 1px 0 #8e96a4">High School<svg class="a" style="right:4.5px;top:5.5px" width="12" height="8" viewBox="0 0 12 8"><path d="M1.5 1.5 L6 6 L10.5 1.5" stroke="#5f646c" stroke-width="1.9" fill="none"/></svg></div>
<div class="a" style="left:852px;top:344.5px;width:14px;height:13.5px;background:#d3d7dd;border-radius:2px"></div>
<div class="a" style="left:875.6px;top:343px;line-height:22px;font-size:15px;color:#1c1c1c">Override</div>
<div class="a inp" style="left:714px;top:366px;width:66px;height:22px;line-height:22px;font-size:16px;color:#6b7079;text-align:center;padding:0 4px">2027</div>
<div class="a lbl" style="left:792.8px;top:364px;line-height:22px;font-size:15.9px">Graduated</div>
<div class="a inp" style="left:886px;top:366px;width:123px;height:22px;line-height:22px;font-size:16px;color:#6b7079;text-align:left;padding:0 4px"></div>
<div class="a inp" style="left:712px;top:392px;width:165px;height:23px;line-height:23px;font-size:15.6px;color:#6b7079;text-align:center;padding:0 4px">2026-01-07 10:18:47</div>
<div class="a lbl" style="left:591px;width:100px;text-align:right;top:313px;line-height:22px;font-size:15.8px">Rank</div>
<div class="a lbl" style="left:599.5px;width:100px;text-align:right;top:391px;line-height:22px;font-size:15.8px">Date</div>
<div class="a lbl" style="left:607.5px;width:100px;text-align:right;top:418px;line-height:22px;font-size:15.8px">Student</div>
<div class="a lbl" style="left:1146px;top:189.0px;line-height:22px;font-size:15.8px">Cum Avg</div>
<div class="a lbl" style="left:1146px;top:216.0px;line-height:22px;font-size:15.8px">Cum Gpa</div>
<div class="a lbl" style="left:1146px;top:242.2px;line-height:22px;font-size:15.8px">Cr Attempt</div>
<div class="a lbl" style="left:1146px;top:268.7px;line-height:22px;font-size:15.8px">Hrs Attempt</div>
<div class="a lbl" style="left:1146px;top:296.0px;line-height:22px;font-size:15.8px">Comments</div>
<div class="a inp" style="left:1253px;top:190px;width:65px;height:23px;line-height:23px;font-size:16px;color:#6b7079;text-align:center;padding:0 4px"></div>
<div class="a inp" style="left:1253px;top:218px;width:65px;height:22px;line-height:22px;font-size:16px;color:#6b7079;text-align:center;padding:0 4px"></div>
<div class="a inp" style="left:1253px;top:244px;width:65px;height:23px;line-height:23px;font-size:16px;color:#6b7079;text-align:center;padding:0 4px">0</div>
<div class="a inp" style="left:1253px;top:271px;width:65px;height:22px;line-height:22px;font-size:16px;color:#6b7079;text-align:center;padding:0 4px"></div>
<div class="a inp" style="left:1454px;top:190px;width:65px;height:23px;line-height:23px;font-size:16px;color:#6b7079;text-align:center;padding:0 4px"></div>
<div class="a inp" style="left:1454px;top:218px;width:65px;height:22px;line-height:22px;font-size:16px;color:#6b7079;text-align:center;padding:0 4px">0</div>
<div class="a inp" style="left:1454px;top:244px;width:65px;height:23px;line-height:23px;font-size:16px;color:#6b7079;text-align:center;padding:0 4px">0</div>
<div class="a inp" style="left:1454px;top:271px;width:65px;height:22px;line-height:22px;font-size:16px;color:#6b7079;text-align:center;padding:0 4px"></div>
<div class="a lbl" style="left:1247px;width:201px;text-align:right;top:190.6px;line-height:22px;font-size:15.8px">Quality Points</div>
<div class="a lbl" style="left:1247px;width:201px;text-align:right;top:217.7px;line-height:22px;font-size:15.8px">Cum GPA UnWt</div>
<div class="a lbl" style="left:1247px;width:201px;text-align:right;top:243.8px;line-height:22px;font-size:15.8px">Cr Earned</div>
<div class="a lbl" style="left:1247px;width:201px;text-align:right;top:270.6px;line-height:22px;font-size:15.8px">Hrs Earned</div>
<div class="a inp" style="left:1253px;top:297px;width:256px;height:93px"></div>
<svg class="a" style="left:1497px;top:378px" width="10" height="10" viewBox="0 0 10 10"><path d="M2 9 L9 2 M6 9 L9 6" stroke="#333" stroke-width="1"/></svg>
<!--/PANEL-->
<!--TOOLBAR-->
<div class="a" style="left:545px;top:76px;width:305px;height:21px;background:#fbf6d2"></div>
<div class="a" style="left:549px;top:76px;height:21px;line-height:20px;font-size:15px;color:#111;white-space:nowrap">214 / 214 Records</div>
<div class="a" style="left:683px;top:77px;height:21px;line-height:20px;font-size:13px;color:#3f4a55;white-space:nowrap">Filter set = <span style="color:#a0541e">Active transcripts</span></div>
<div class="a" style="left:854px;top:76px;line-height:21px;font-size:14.5px;color:#111">Per Page:</div>
<div class="a sel" style="left:922px;top:76px;width:72px;height:21px"><span style="left:6px">1,000</span><svg class="chev" style="left:55px" width="12" height="8" viewBox="0 0 12 8"><path d="M1.5 1.5 L6 6 L10.5 1.5" stroke="#111" stroke-width="1.8" fill="none"/></svg></div>
<div class="a" style="left:1002px;top:76px;line-height:21px;font-size:14.5px;color:#111">Order:</div>
<div class="a sel" style="left:1051px;top:76px;width:103px;height:21px"><span style="left:4px">id # desc</span><svg class="chev" style="left:87px" width="12" height="8" viewBox="0 0 12 8"><path d="M1.5 1.5 L6 6 L10.5 1.5" stroke="#111" stroke-width="1.8" fill="none"/></svg></div>
<div class="a sel" style="left:560px;top:108px;width:178px;height:20px"><span style="right:31px;font-weight:bold;font-size:16px;line-height:19px">Active transcripts</span><svg class="chev" style="left:161px;top:6px" width="12" height="8" viewBox="0 0 12 8"><path d="M1.5 1.5 L6 6 L10.5 1.5" stroke="#111" stroke-width="1.8" fill="none"/></svg></div>
<div class="a btn" style="left:746px;top:102px;width:80px;height:35px"><svg class="a" style="left:5px;top:8px" width="18" height="18" viewBox="0 0 18 18"><path d="M1.2 8.8 Q3 4.6 10.5 4.6" stroke="#89be72" stroke-width="3.6" fill="none" stroke-linecap="round"/><path d="M9.8 0.3 L15.8 4.6 L9.8 8.9Z" fill="#89be72"/><path d="M16.8 9.2 Q15 13.4 7.5 13.4" stroke="#7ab262" stroke-width="3.6" fill="none" stroke-linecap="round"/><path d="M8.2 9.1 L2.2 13.4 L8.2 17.7Z" fill="#7ab262"/></svg><span class="a" style="left:26.5px">Refresh</span></div>
<div class="a btn" style="left:830px;top:102px;width:65px;height:35px"><svg class="a" style="left:6px;top:8px" width="18" height="18" viewBox="0 0 18 18"><circle cx="7.5" cy="7.5" r="5.5" fill="#d4e2f6" stroke="#a8bad3" stroke-width="1.3"/><path d="M11.3 11.3 L16 16" stroke="#c0a060" stroke-width="2.8" stroke-linecap="round"/></svg><span class="a" style="left:27.8px">Filter</span></div>
<div class="a btn" style="left:899px;top:102px;width:93px;height:35px"><svg class="a" style="left:6px;top:8px" width="18" height="18" viewBox="0 0 18 18"><circle cx="7" cy="7" r="5.5" fill="#d4e2f6" stroke="#a8bad3" stroke-width="1.3"/><path d="M11 11 L15.5 15.5" stroke="#c0a060" stroke-width="2.6" stroke-linecap="round"/><path d="M11.5 4 H14 V6.5 H16.5 V9 H14 V11.5 H11.5 V9 H9 V6.5 H11.5Z" fill="#5aa040"/></svg><span class="a" style="left:27.8px">Advanced</span></div>
<div class="a btn" style="left:997px;top:102px;width:57px;height:35px"><svg class="a" style="left:6px;top:8px" width="18" height="18" viewBox="0 0 18 18"><circle cx="9" cy="9" r="8" fill="#8cc47a" stroke="#6aa85a" stroke-width="1"/><path d="M7.8 4.5 H10.2 V7.8 H13.5 V10.2 H10.2 V13.5 H7.8 V10.2 H4.5 V7.8 H7.8Z" fill="#f4fbef"/></svg><span class="a" style="left:27.1px">Add</span></div>
<div class="a btn" style="left:1060px;top:102px;width:58px;height:35px"><svg class="a" style="left:6px;top:8px" width="18" height="18" viewBox="0 0 18 18"><path d="M3 13 L13 2.5 L16 5.5 L5.5 15.5 L2 16.5Z" fill="#e8d36a" stroke="#b8983a" stroke-width="1"/><path d="M2 16.5 L3 13 L5.5 15.5Z" fill="#6a5a30"/></svg><span class="a" style="left:27.2px">Edit</span></div>
<div class="a btn" style="left:1123px;top:102px;width:72px;height:35px"><svg class="a" style="left:5px;top:8px" width="18" height="18" viewBox="0 0 18 18"><circle cx="9" cy="9" r="8" fill="#e4786a" stroke="#c95a4e" stroke-width="1"/><rect x="4.5" y="7.8" width="9" height="2.6" fill="#fbeeee"/></svg><span class="a" style="left:26.9px">Delete</span></div>
<div class="a btn" style="left:1200px;top:102px;width:115px;height:35px"><svg class="a" style="left:6px;top:8px" width="18" height="18" viewBox="0 0 18 18"><circle cx="9" cy="9" r="8" fill="#3a3535"/><circle cx="9" cy="9" r="6" fill="#4a4444"/><rect x="7" y="7" width="4" height="4" rx="1" fill="#d83a3a"/></svg><span class="a" style="left:27.6px">Make Inactive</span></div>
<div class="a tab" style="left:650px;width:84.5px"></div>
<div class="a tab" style="left:734px;width:72.5px"></div>
<div class="a tab" style="left:806px;width:60.0px"></div>
<div class="a tab" style="left:865.5px;width:99.0px"></div>
<div class="a tab" style="left:964px;width:58.5px"></div>
<div class="a tab" style="left:1022px;width:41.5px"></div>
<div class="a tabt" style="left:688.7px">Scores</div>
<div class="a tabt" style="left:743.7px">Activities</div>
<div class="a tabt" style="left:813.6px">Awards</div>
<div class="a tabt" style="left:873.6px">Endorsements</div>
<div class="a tabt" style="left:973.0px">Grades</div>
<div class="a tabt" style="left:1030.5px">GPA</div>
<svg class="a" style="left:1083px;top:154px" width="21" height="19" viewBox="0 0 21 19"><rect x="5" y="1" width="10" height="7" fill="#f4f6fa" stroke="#9aa6b8" stroke-width=".8"/><path d="M1.5 9 Q1.5 6.5 4 6.5 H17 Q19.5 6.5 19.5 9 V15 H1.5Z" fill="#b9c2cf" stroke="#8590a0" stroke-width=".8"/><rect x="4.5" y="12" width="12" height="6" fill="#eef1f6" stroke="#8a94a4" stroke-width=".8"/></svg>
<div class="a" style="left:1106.5px;top:152px;line-height:20px;font-size:15px;color:#333;text-decoration:underline;white-space:pre"> Print</div>
<!--/TOOLBAR-->
<!--MENU-->
<div class="a" style="left:478px;top:76px;width:67px;height:27px;background:#2e2e2e"></div>
<div class="a" style="left:490px;top:77.5px;line-height:25px;font-size:12px;font-weight:bold;color:#b5b5b5;letter-spacing:.1px">Actions</div>
<div class="a" style="left:478px;top:102px;width:210px;height:600px;background:#2e2e2e;border-right:1px solid #000"></div>
<div class="a mi" style="left:513.4px;top:105.4px;color:#fff">Add/Edit Scores</div>
<svg class="a" style="left:488px;top:106px" width="20" height="20" viewBox="0 0 20 20"><path d="M0.3 1.6 H17.7 V17.4" stroke="#0a0a0a" stroke-width="1.6" fill="none"/><path d="M2.7 15.7 L12.5 6.3" stroke="#0a0a0a" stroke-width="1.4"/><path d="M9 5.2 L14.2 4.6 L13.7 9.8Z" fill="#0a0a0a"/></svg>
<div class="a mi" style="left:513.4px;top:130.9px;color:#fff">Post Grades</div>
<div class="a mi" style="left:513.4px;top:156.0px;color:#fff">Update In Process</div>
<div class="a mi" style="left:513.4px;top:181.8px;color:#fff">UnPost Grades</div>
<div class="a mi" style="left:513.4px;top:207.8px;color:#fff">Update FROM Students</div>
<div class="a mi" style="left:513.4px;top:235.6px;color:#c8c8c8">Average Grades</div>
<svg class="a" style="left:488px;top:236px" width="20" height="20" viewBox="0 0 20 20"><rect x="3" y="2" width="13" height="15" rx="1" fill="#c9d2de" stroke="#8d9aab" stroke-width=".8"/><rect x="4.5" y="3.5" width="10" height="3" fill="#7d95c9"/><path d="M5 9 H14 M5 11.5 H14 M5 14 H14 M7.5 8 V16 M10 8 V16 M12.5 8 V16" stroke="#8a96a8" stroke-width=".8"/></svg>
<div class="a mi" style="left:513.4px;top:260.4px;color:#fff">Calculate Rank</div>
<svg class="a" style="left:488px;top:261px" width="20" height="20" viewBox="0 0 20 20"><rect x="3" y="2" width="13" height="15" rx="1" fill="#c9d2de" stroke="#8d9aab" stroke-width=".8"/><rect x="4.5" y="3.5" width="10" height="3" fill="#7d95c9"/><path d="M5 9 H14 M5 11.5 H14 M5 14 H14 M7.5 8 V16 M10 8 V16 M12.5 8 V16" stroke="#8a96a8" stroke-width=".8"/></svg>
<div class="a mi" style="left:517.5px;top:287.0px;color:#fff">Print Transcript</div>
<svg class="a" style="left:488px;top:288px" width="20" height="20" viewBox="0 0 20 20"><rect x="5" y="1" width="9" height="6" fill="#f2f4f8" stroke="#97a3b5" stroke-width=".8"/><path d="M1 9 Q1 6.5 3.5 6.5 H15.5 Q18 6.5 18 9 V15 H1Z" fill="#c3cad5" stroke="#8892a3" stroke-width=".8"/><rect x="4" y="12" width="11" height="6" fill="#eef1f6" stroke="#8a94a4" stroke-width=".8"/></svg>
<div class="a mi" style="left:517.5px;top:313.1px;color:#fff">Print Requirements</div>
<svg class="a" style="left:488px;top:314px" width="20" height="20" viewBox="0 0 20 20"><rect x="5" y="1" width="9" height="6" fill="#f2f4f8" stroke="#97a3b5" stroke-width=".8"/><path d="M1 9 Q1 6.5 3.5 6.5 H15.5 Q18 6.5 18 9 V15 H1Z" fill="#c3cad5" stroke="#8892a3" stroke-width=".8"/><rect x="4" y="12" width="11" height="6" fill="#eef1f6" stroke="#8a94a4" stroke-width=".8"/></svg>
<div class="a mi" style="left:517.5px;top:338.8px;color:#fff">Print Cover Sheet</div>
<svg class="a" style="left:488px;top:340px" width="20" height="20" viewBox="0 0 20 20"><rect x="5" y="1" width="9" height="6" fill="#f2f4f8" stroke="#97a3b5" stroke-width=".8"/><path d="M1 9 Q1 6.5 3.5 6.5 H15.5 Q18 6.5 18 9 V15 H1Z" fill="#c3cad5" stroke="#8892a3" stroke-width=".8"/><rect x="4" y="12" width="11" height="6" fill="#eef1f6" stroke="#8a94a4" stroke-width=".8"/></svg>
<div class="a mi" style="left:513.4px;top:365.7px;color:#fff">Endorsements</div>
<svg class="a" style="left:488px;top:367px" width="20" height="20" viewBox="0 0 20 20"><path d="M1.5 9 L5 7 L8 11 L16 2 L18 4 L8 16Z" fill="#4f9a3a"/><path d="M8 11 L16 2 L18 4 L8 16Z" fill="#3b8a2c"/></svg>
<div class="a mi" style="left:513.4px;top:390.8px;color:#fff">Awards</div>
<svg class="a" style="left:487px;top:392px" width="20" height="20" viewBox="0 0 20 20"><circle cx="9.5" cy="7" r="6" fill="#d44a3a"/><circle cx="9.5" cy="7" r="3.5" fill="#e87a6a"/><path d="M5 11 L2.5 17.5 L6 16.5 L7.5 18 L9 12Z M14 11 L16.5 17.5 L13 16.5 L11.5 18 L10 12Z" fill="#c43a2a"/></svg>
<div class="a mi" style="left:513.4px;top:416.6px;color:#fff">Activities</div>
<svg class="a" style="left:487px;top:418px" width="20" height="20" viewBox="0 0 20 20"><circle cx="8" cy="5" r="3.2" fill="#e6b48c"/><path d="M5 4 Q8 0 11 4Z" fill="#6b4a2a"/><path d="M2 17 Q2 9 8 9 Q13 9 13 13Z" fill="#4a7ac8"/><path d="M9 12 H14 V9 L19 13.5 L14 18 V15 H9Z" fill="#7bc05a"/></svg>
<div class="a mi" style="left:513.4px;top:443.8px;color:#fff">Lock/Unlock</div>
<svg class="a" style="left:488px;top:445px" width="20" height="20" viewBox="0 0 20 20"><path d="M5 9 V6 Q5 1.5 9.5 1.5 Q14 1.5 14 6 V9" stroke="#b8b8a0" stroke-width="2" fill="none"/><rect x="2" y="8.5" width="15" height="10" rx="1" fill="#e2c25a" stroke="#b8983a" stroke-width=".8"/><rect x="8.5" y="11.5" width="2" height="4" fill="#8a6a20"/></svg>
<div class="a mi" style="left:513.4px;top:470.8px;color:#fff">DeActivate For Inactive</div>
<svg class="a" style="left:488px;top:472px" width="20" height="20" viewBox="0 0 20 20"><circle cx="9" cy="9" r="7.5" fill="#3b3636"/><circle cx="9" cy="9" r="6" fill="#464040"/><rect x="7" y="7" width="4" height="4" rx="1.2" fill="#d94848"/></svg>
<div class="a mi" style="left:513.4px;top:496.6px;color:#fff">Test Scores</div>
<svg class="a" style="left:487px;top:497px" width="20" height="20" viewBox="0 0 20 20"><text x="1" y="17" font-family="Liberation Sans" font-style="italic" font-weight="bold" font-size="15" fill="#b8332a">A</text><path d="M13.5 2.5 V8.5 M10.5 5.5 H16.5" stroke="#b8332a" stroke-width="1.6"/></svg>
<div class="a mi" style="left:513.4px;top:521.8px;color:#fff">Hope Transcript Export</div>
<svg class="a" style="left:488px;top:522px" width="20" height="20" viewBox="0 0 20 20"><path d="M3 4 Q3 1.5 6 1.5 H16 V15 Q16 18 13 18 H3Z" fill="#b7c8ea" stroke="#7d95c9" stroke-width=".9"/><path d="M6 5 H13 M6 8 H13 M6 11 H13" stroke="#8aa0d0" stroke-width=".8"/></svg>
<div class="a mi" style="left:518.5px;top:548.9px;color:#fff">Batch Tag</div>
<svg class="a" style="left:488px;top:548.5px" width="21" height="21" viewBox="0 0 21 21"><rect x="0.5" y="0.5" width="20" height="20" fill="#777"/><rect x="2" y="2" width="17" height="17" fill="#fff"/><rect x="2" y="2" width="17" height="1.5" fill="#aaa"/><rect x="2" y="2" width="1.5" height="17" fill="#aaa"/><path d="M4.5 11 L8.5 16 L17.5 3.5" stroke="#000" stroke-width="3" fill="none"/></svg>
<div class="a mi" style="left:518.5px;top:574.7px;color:#fff">Clear All Tags</div>
<svg class="a" style="left:488px;top:574.5px" width="21" height="21" viewBox="0 0 21 21"><rect x="0.5" y="0.5" width="20" height="20" fill="#777"/><rect x="2" y="2" width="17" height="17" fill="#fff"/><rect x="2" y="2" width="17" height="1.5" fill="#aaa"/><rect x="2" y="2" width="1.5" height="17" fill="#aaa"/></svg>
<div class="a mi" style="left:513.4px;top:599.9px;color:#fff">Tag Filtered Records</div>
<svg class="a" style="left:489px;top:603.5px" width="17" height="17" viewBox="0 0 17 17"><rect x="0.5" y="0.5" width="16" height="16" fill="#d8d8d8" stroke="#9a9a9a" stroke-width="1"/><path d="M3.5 8.5 L6.5 13 L13.5 3.5" stroke="#111" stroke-width="2.2" fill="none"/></svg>
<div class="a mi" style="left:513.4px;top:625.4px;color:#fff">Make Tagged Inactive</div>
<svg class="a" style="left:488px;top:627px" width="20" height="20" viewBox="0 0 20 20"><circle cx="9" cy="9" r="7.5" fill="#3b3636"/><circle cx="9" cy="9" r="6" fill="#464040"/><rect x="7" y="7" width="4" height="4" rx="1.2" fill="#d94848"/></svg>
<div class="a mi" style="left:513.4px;top:651.2px;color:#fff">Batch Edit Tags</div>
<svg class="a" style="left:488px;top:652px" width="20" height="20" viewBox="0 0 20 20"><path d="M2 14 L13 2.5 L16.5 6 L5.5 17 L1.5 18Z" fill="#e6cf6a" stroke="#b09040" stroke-width=".9"/><path d="M1.5 18 L2.2 14.5 L5 17.3Z" fill="#5a4a2a"/></svg>
<div class="a mi" style="left:513.4px;top:676.7px;color:#fff">Save Grid As Template</div>
<svg class="a" style="left:489px;top:679px" width="20" height="20" viewBox="0 0 20 20"><rect x="1.5" y="1.5" width="15" height="16" fill="#eef3fb" stroke="#8aa0cc" stroke-width="1"/><rect x="1.5" y="1.5" width="15" height="3" fill="#9fb4dd"/><path d="M2 8 H16 M2 11 H16 M2 14 H16 M6 5 V17 M11 5 V17" stroke="#a9bde0" stroke-width=".8"/></svg>
<div class="a" style="left:478px;top:230.2px;width:210px;height:1.6px;background:#e6e6e6"></div>
<div class="a" style="left:478px;top:282.8px;width:210px;height:1.6px;background:#e6e6e6"></div>
<div class="a" style="left:478px;top:361.4px;width:210px;height:1.6px;background:#e6e6e6"></div>
<div class="a" style="left:478px;top:439.8px;width:210px;height:1.6px;background:#e6e6e6"></div>
<div class="a" style="left:478px;top:466.8px;width:210px;height:1.6px;background:#e6e6e6"></div>
<div class="a" style="left:478px;top:544.5px;width:210px;height:1.6px;background:#e6e6e6"></div>
<div class="a" style="left:504px;top:184.3px;width:124.4px;height:124.4px;border-radius:50%;border:6.2px solid #f7943b;background:rgba(247,148,60,.53)"></div>
<!--/MENU-->
<!--ICONS-->
<svg class="a" style="left:596.6px;top:32px" width="20" height="20" viewBox="0 0 20 20"><circle cx="8" cy="8" r="6" fill="#dde8f7" stroke="#a9b9cf" stroke-width="1.5"/><ellipse cx="6.5" cy="6.5" rx="2.5" ry="2" fill="#fff" opacity=".8"/><path d="M12 12 L17.5 17.5" stroke="#b39552" stroke-width="3" stroke-linecap="round"/></svg>
<svg class="a" style="left:622.8px;top:32px" width="20" height="20" viewBox="0 0 20 20"><rect x="1" y="2.5" width="18" height="15" fill="#e6eefa" stroke="#7b93c4" stroke-width="1"/><rect x="1" y="2.5" width="18" height="3" fill="#9fb4dd"/><rect x="3.5" y="7" width="4" height="3.5" fill="#9cc0e6"/><rect x="8.5" y="7" width="4" height="3.5" fill="#7fb36a"/><rect x="13.5" y="7" width="4" height="3.5" fill="#8fc0e0"/><rect x="3.5" y="12" width="4" height="3.5" fill="#8ab06a"/><rect x="8.5" y="12" width="4" height="3.5" fill="#e5a56a"/><rect x="13.5" y="12" width="4" height="3.5" fill="#f0d070"/></svg>
<svg class="a" style="left:648.3px;top:32px" width="20" height="20" viewBox="0 0 20 20"><text x="10" y="16.5" text-anchor="middle" font-family="Liberation Sans" font-weight="bold" font-size="21" fill="#3540b8">@</text></svg>
<svg class="a" style="left:674.3px;top:32px" width="20" height="20" viewBox="0 0 20 20"><ellipse cx="9" cy="10" rx="8.5" ry="5.5" fill="#5fb446"/><path d="M8 14 L6 18 L12 14Z" fill="#5fb446"/><circle cx="5" cy="10" r="1.2" fill="#1d3b12"/><circle cx="9" cy="10" r="1.2" fill="#1d3b12"/><circle cx="13" cy="10" r="1.2" fill="#1d3b12"/><circle cx="15.5" cy="4" r="3" fill="#d7f0c8" stroke="#5fb446" stroke-width="1"/><circle cx="15.5" cy="4" r="1.2" fill="#333"/></svg>
<svg class="a" style="left:699.8px;top:32px" width="20" height="20" viewBox="0 0 20 20"><rect x="5" y="1" width="10" height="18" rx="2" fill="#151515"/><rect x="6.5" y="3" width="7" height="12" fill="#eee"/><rect x="8.5" y="16.3" width="3" height="1.5" fill="#888"/></svg>
<svg class="a" style="left:725.8px;top:32px" width="20" height="20" viewBox="0 0 20 20"><path d="M1 7 H5 L10 3 V17 L5 13 H1Z" fill="#7d7d7d"/><path d="M12 7.5 Q13.5 10 12 12.5" stroke="#d23a3a" stroke-width="1.3" fill="none"/><path d="M14 5.5 Q17 10 14 14.5" stroke="#d23a3a" stroke-width="1.3" fill="none"/><path d="M16 4 Q19.5 10 16 16" stroke="#e88" stroke-width="1" fill="none"/></svg>
<svg class="a" style="left:751.3px;top:32px" width="20" height="20" viewBox="0 0 20 20"><rect x="1.5" y="2" width="17" height="16" fill="#e9f0f8" stroke="#8fa6c8" stroke-width="1"/><rect x="2" y="2.5" width="16" height="3" fill="#f0a070"/><path d="M4 8 H16 M4 11 H16 M4 14 H16 M7 7 V16 M10 7 V16 M13 7 V16" stroke="#6fae5a" stroke-width="1"/></svg>
<svg class="a" style="left:777.0px;top:32px" width="20" height="20" viewBox="0 0 20 20"><rect x="2" y="3" width="16" height="15" fill="#fafafa" stroke="#bbb" stroke-width="1"/><rect x="2" y="3" width="16" height="5" fill="#d23b2f"/><circle cx="6" cy="3" r="1.3" fill="#eee" stroke="#a33" stroke-width=".6"/><circle cx="14" cy="3" r="1.3" fill="#eee" stroke="#a33" stroke-width=".6"/><text x="10" y="16" text-anchor="middle" font-family="Liberation Sans" font-size="7.5" fill="#8a8a8a">17</text></svg>
<svg class="a" style="left:803.5px;top:32px" width="20" height="20" viewBox="0 0 20 20"><path d="M6 8 L16 2 V17 L6 12Z" fill="#d9d9d9" stroke="#9a9a9a" stroke-width="1"/><ellipse cx="16.5" cy="9.5" rx="2" ry="7.5" fill="#c8c8c8" stroke="#999" stroke-width=".8"/><rect x="1" y="7.5" width="7" height="5" rx="1.5" fill="#e07a2e"/><path d="M4 12 L5 17 H7 L7 12" fill="#aaa"/></svg>
<svg class="a" style="left:837.4px;top:32px" width="20" height="20" viewBox="0 0 20 20"><path d="M5 6 Q5 1 10 1 Q15 1 15 6 L16 12 H4Z" fill="#9b5a2a"/><circle cx="10" cy="7.5" r="3.8" fill="#e6b48c"/><path d="M2 19 Q2 12 10 12 Q18 12 18 19Z" fill="#7f9cd6"/><path d="M14.5 10.5 H17 V13 H19.5 V15.5 H17 V18 H14.5 V15.5 H12 V13 H14.5Z" fill="#e02020" stroke="#fff" stroke-width=".5"/></svg>
<svg class="a" style="left:866.7px;top:32px" width="20" height="20" viewBox="0 0 20 20"><path d="M5 6 Q5 1 10 1 Q15 1 15 6 L16 12 H4Z" fill="#9b5a2a"/><circle cx="10" cy="7.5" r="3.8" fill="#e6b48c"/><path d="M2 19 Q2 12 10 12 Q18 12 18 19Z" fill="#7f9cd6"/></svg>
<svg class="a" style="left:893.0px;top:32px" width="20" height="20" viewBox="0 0 20 20"><path d="M1 11 L11 2 L19 8 L9 17Z" fill="#8ccf72" stroke="#5f9f4a" stroke-width="1"/><path d="M3 13 L12 5 L18 9.5 L9 17.5Z" fill="#a9dd8e" stroke="#5f9f4a" stroke-width=".8"/><circle cx="10.5" cy="11" r="2" fill="#e9f7e0"/></svg>
<svg class="a" style="left:921.5px;top:32px" width="20" height="20" viewBox="0 0 20 20"><circle cx="7" cy="5" r="3.3" fill="#e6b48c"/><path d="M3.5 4.5 Q7 0 10.5 4.5" fill="#3a2a20"/><path d="M1 16 Q1 9 7 9 Q12 9 12 14Z" fill="#1e1e1e"/><circle cx="14" cy="6" r="3.3" fill="#e6b48c"/><path d="M10.5 6 Q14 0 17.5 6 L18 10 H10Z" fill="#6b3a28" opacity=".9"/><circle cx="14" cy="6.5" r="2.5" fill="#e6b48c"/><path d="M9 19 Q9 11 14.5 11 Q19.5 11 19.5 19Z" fill="#c8208a"/><circle cx="9.5" cy="11" r="2.6" fill="#e9c08f"/><path d="M5.5 19 Q5.5 14 9.5 14 Q13.5 14 13.5 19Z" fill="#e7d21e"/></svg>
<svg class="a" style="left:950.8px;top:32px" width="20" height="20" viewBox="0 0 20 20"><path d="M1.5 9 Q1.5 2 10 2 Q18.5 2 18.5 9Z" fill="#c9a54a"/><rect x="1" y="9" width="18" height="2" fill="#6e8a2a"/><rect x="1" y="11" width="18" height="2" fill="#b5401f"/><path d="M1.5 13 H18.5 Q18.5 17 10 17 Q1.5 17 1.5 13Z" fill="#c9a54a"/></svg>
<svg class="a" style="left:975.5px;top:32px" width="20" height="20" viewBox="0 0 20 20"><rect x="3" y="1" width="14" height="18" rx="1" fill="#6f8fcf" stroke="#4a64a0" stroke-width="1"/><rect x="7" y="5" width="6" height="1.2" fill="#dfe7f7"/></svg>
<svg class="a" style="left:1000.4px;top:32px" width="20" height="20" viewBox="0 0 20 20"><path d="M4 15 Q6 12 6 7 Q8 2 13 3 Q17 6 16 11 Q16 15 19 17Z" fill="#d7b33e" stroke="#a88420" stroke-width=".8" transform="rotate(-20 10 10)"/><circle cx="9" cy="16.5" r="1.6" fill="#b38c22"/></svg>
<svg class="a" style="left:1027.0px;top:32px" width="20" height="20" viewBox="0 0 20 20"><rect x="2" y="1" width="13" height="14" fill="#f4e59a" stroke="#d8c56a" stroke-width=".8"/><path d="M9 11 H14 V8 L19 12.5 L14 17 V14 H9Z" fill="#6bb94a" stroke="#4a8a30" stroke-width=".6"/></svg>
<svg class="a" style="left:1055.2px;top:32px" width="20" height="20" viewBox="0 0 20 20"><circle cx="10" cy="5.5" r="4" fill="#555"/><path d="M2 19 Q2 10.5 10 10.5 Q18 10.5 18 19Z" fill="#555"/><path d="M9 11 L11 11 L11.5 16 L10 17.5 L8.5 16Z" fill="#d02020"/></svg>
<svg class="a" style="left:1080.7px;top:32px" width="20" height="20" viewBox="0 0 20 20"><circle cx="5" cy="4" r="3" fill="#e6cd5a"/><circle cx="15" cy="4" r="3" fill="#e6cd5a"/><circle cx="10" cy="11" r="7.5" fill="#7da0d8" stroke="#5f84c4" stroke-width="1"/><circle cx="10" cy="11" r="5.3" fill="#fff"/><path d="M10 7.5 V11 H13" stroke="#333" stroke-width="1.3" fill="none"/></svg>
<svg class="a" style="left:1111.2px;top:32px" width="20" height="20" viewBox="0 0 20 20"><rect x="2" y="1.5" width="16" height="17" fill="#eef3fb" stroke="#9db2d6" stroke-width="1"/><rect x="2" y="1.5" width="16" height="3" fill="#c5d4ee"/><path d="M2.5 8 H17.5 M2.5 11 H17.5 M2.5 14 H17.5 M7 5 V18" stroke="#a9bde0" stroke-width=".8"/></svg>
<svg class="a" style="left:1136.7px;top:32px" width="20" height="20" viewBox="0 0 20 20"><rect x="1" y="6" width="18" height="8" fill="#d4e83c" stroke="#1a1a1a" stroke-width="1.5"/><rect x="3" y="9.5" width="14" height="1.2" fill="#333"/></svg>
<svg class="a" style="left:1162.2px;top:32px" width="20" height="20" viewBox="0 0 20 20"><rect x="3" y="1" width="9" height="5" fill="#eee" stroke="#aaa" stroke-width=".7"/><rect x="1" y="5" width="13" height="7" rx="1.5" fill="#c9c9c9" stroke="#888" stroke-width=".7"/><rect x="5" y="11" width="14" height="8" fill="#d4e83c" stroke="#1a1a1a" stroke-width="1.5"/><rect x="7" y="14.5" width="10" height="1" fill="#333"/></svg>
<svg class="a" style="left:1188.5px;top:32px" width="20" height="20" viewBox="0 0 20 20"><rect x="0.5" y="1.5" width="19" height="17" fill="#5560d0"/><text x="10" y="14" text-anchor="middle" font-family="Liberation Sans" font-weight="bold" font-size="9.5" fill="#fff">A/P</text></svg>
<svg class="a" style="left:1219.5px;top:32px" width="20" height="20" viewBox="0 0 20 20"><path d="M3 1 H13 L17 5 V19 H3Z" fill="#fafafa" stroke="#c8c8c8" stroke-width="1"/><path d="M5 16 Q8 11 9 5 Q10 3 10.5 6 Q11 11 16 13 Q11 12 7 15 Q5 17 5 16Z" fill="none" stroke="#e03030" stroke-width="1.3"/></svg>
<svg class="a" style="left:1245.0px;top:32px" width="20" height="20" viewBox="0 0 20 20"><path d="M2 11 L7 7 H18 L18 15 L13 19 H2Z" fill="#6a6a6a"/><path d="M2 11 H13 V19 H2Z" fill="#8a8a8a"/><path d="M6 2 H17 V8 H6Z" fill="#5aa040" transform="skewX(-10)"/><rect x="7" y="3.5" width="8" height="3" fill="#cfe8b0"/></svg>
<svg class="a" style="left:1271.3px;top:32px" width="20" height="20" viewBox="0 0 20 20"><circle cx="10" cy="10" r="8.5" fill="#a9bde6" stroke="#8ea6d8" stroke-width="1"/><circle cx="10" cy="10" r="6" fill="#6f8fd0"/><text x="10" y="14" text-anchor="middle" font-family="Liberation Sans" font-weight="bold" font-size="10" fill="#fff">?</text></svg>
<svg class="a" style="left:1296.0px;top:32px" width="20" height="20" viewBox="0 0 20 20"><circle cx="10" cy="10" r="8" fill="#fff" stroke="#b56a6a" stroke-width="2.5"/><rect x="8.8" y="4.5" width="2.4" height="7" fill="#b56a6a"/><circle cx="10" cy="14.5" r="1.3" fill="#b56a6a"/></svg>
<div class="a" style="left:828px;top:33px;width:1px;height:20px;background:#111"></div>
<div class="a" style="left:946px;top:33px;width:1px;height:20px;background:#111"></div>
<div class="a" style="left:1050px;top:33px;width:1px;height:20px;background:#111"></div>
<div class="a" style="left:1106px;top:33px;width:1px;height:20px;background:#111"></div>
<div class="a" style="left:1216px;top:33px;width:1px;height:20px;background:#111"></div>
<div class="a" style="left:1414px;top:29.5px;font-size:11.6px;line-height:14px;color:#22225a">2-Tech Support-2 (s8)<br><span style="color:#3a3aa8;text-decoration:underline">Clock In</span></div>
<!--/ICONS-->
<div id="wline" class="a"></div>
<div id="hline" class="a"></div>
</body></html>
